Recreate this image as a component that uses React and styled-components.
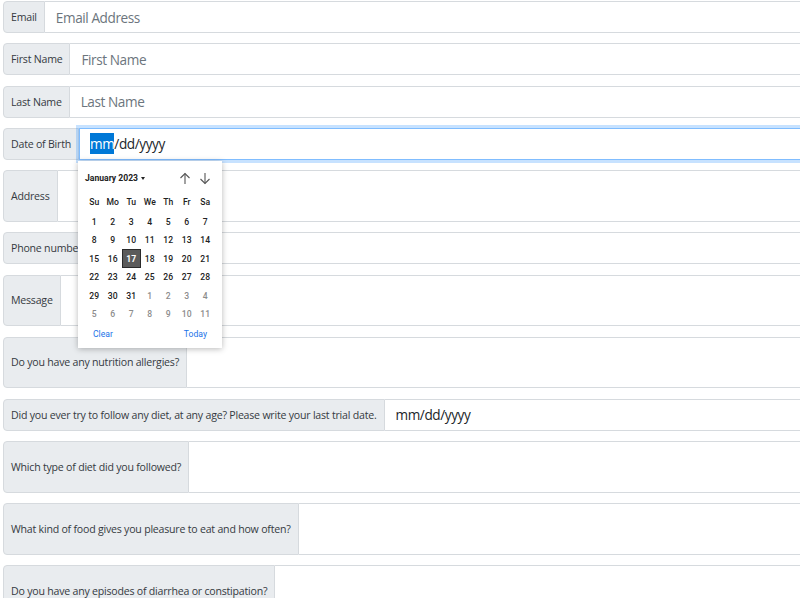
import React from "react";
import styled, { createGlobalStyle } from "styled-components";

const Global = createGlobalStyle`
  html, body { margin: 0; padding: 0; background: #fff; overflow: hidden; }
  body { font-family: "Open Sans", "Noto Sans", sans-serif; }
  * { box-sizing: border-box; }
`;

const Page = styled.div`
  width: 840px;
  padding: 1px 0 0 3px;
  display: flex;
  flex-direction: column;
  gap: 10.33px;
`;

const Row = styled.div`
  position: relative;
  display: flex;
  align-items: stretch;
  height: ${(p) => (p.$tall ? "51.67px" : "32px")};
`;

const Label = styled.div`
  display: flex;
  align-items: center;
  padding: 0 7px;
  background: #e9ecef;
  border: 1px solid #d6dade;
  border-radius: 4px 0 0 4px;
  font-size: 10.6px;
  letter-spacing: -0.22px;
  color: #353a3f;
  white-space: nowrap;
`;

const Field = styled.div`
  flex: 1;
  display: flex;
  align-items: center;
  padding: 0 11px;
  background: #fff;
  border: 1px solid #d6dade;
  border-left: none;
  font-size: 13.6px;
  letter-spacing: -0.42px;
  color: ${(p) => (p.$placeholder ? "#6c757d" : "#212529")};
  ${(p) =>
    p.$focus &&
    `
    border: 1px solid #80bdff;
    box-shadow: 0 0 0 3px rgba(0,123,255,.22);
    padding-left: 10px;
  `}
`;

const Sel = styled.span`
  background: #0078d7;
  color: #fff;
  padding: 1px 0;
`;

const Popup = styled.div`
  position: absolute;
  left: 75px;
  top: 33px;
  width: 144px;
  height: 187px;
  background: #fff;
  box-shadow: 0 1px 6px rgba(0, 0, 0, 0.28);
  font-family: Roboto, "Liberation Sans", sans-serif;
  font-size: 8.6px;
  letter-spacing: 0;
  color: #222;
  z-index: 5;
  display: flex;
  flex-direction: column;
  padding: 9px 7px 0 7px;
`;

const CalHead = styled.div`
  display: flex;
  align-items: center;
  height: 17px;
`;

const Month = styled.div`
  font-weight: 700;
  display: flex;
  align-items: center;
  gap: 3px;
  flex: 1;
`;

const Caret = styled.span`
  width: 0;
  height: 0;
  border-left: 2.5px solid transparent;
  border-right: 2.5px solid transparent;
  border-top: 3px solid #222;
`;

const ArrowBtn = styled.div`
  width: 20px;
  display: flex;
  justify-content: center;
  align-items: center;
`;

const Grid = styled.div`
  display: grid;
  grid-template-columns: repeat(7, 18.5px);
  grid-auto-rows: 18.5px;
  margin-top: 7px;
`;

const Cell = styled.div`
  display: flex;
  align-items: center;
  justify-content: center;
  font-weight: 500;
  color: ${(p) => (p.$muted ? "#8c8c8c" : "#222")};
  margin-bottom: ${(p) => (p.$head ? "1.5px" : "0")};
  ${(p) =>
    p.$sel &&
    `
    background: #5b5b5b;
    border: 1.5px solid #2a2a2a;
    color: #fff;
    font-weight: 700;
  `}
`;

const Foot = styled.div`
  display: flex;
  justify-content: space-between;
  padding: 0 8px 0 8px;
  margin-top: 6px;
  color: #1a73e8;
  font-size: 8.6px;
`;

const Arrow = ({ down }) => (
  <svg width="12" height="13" viewBox="0 0 12 13">
    <g
      fill="none"
      stroke="#555"
      strokeWidth="1.1"
      transform={down ? "rotate(180 6 6.5)" : undefined}
    >
      <path d="M6 1.5V12" />
      <path d="M1.5 6L6 1.5L10.5 6" />
    </g>
  </svg>
);

const heads = ["Su", "Mo", "Tu", "We", "Th", "Fr", "Sa"];
const days = [];
for (let d = 1; d <= 31; d++) days.push({ n: d });
for (let d = 1; d <= 11; d++) days.push({ n: d, muted: true });

const Calendar = () => (
  <Popup>
    <CalHead>
      <Month>
        January 2023 <Caret />
      </Month>
      <ArrowBtn>
        <Arrow />
      </ArrowBtn>
      <ArrowBtn>
        <Arrow down />
      </ArrowBtn>
    </CalHead>
    <Grid>
      {heads.map((h) => (
        <Cell key={h} $head>
          {h}
        </Cell>
      ))}
      {days.map((d, i) => (
        <Cell key={i} $muted={d.muted} $sel={!d.muted && d.n === 17}>
          {d.n}
        </Cell>
      ))}
    </Grid>
    <Foot>
      <span>Clear</span>
      <span>Today</span>
    </Foot>
  </Popup>
);

const rows = [
  { label: "Email", ph: "Email Address" },
  { label: "First Name", ph: "First Name" },
  { label: "Last Name", ph: "Last Name" },
  { label: "Date of Birth", dob: true },
  { label: "Address", tall: true },
  { label: "Phone number" },
  { label: "Message", tall: true },
  { label: "Do you have any nutrition allergies?", tall: true },
  {
    label:
      "Did you ever try to follow any diet, at any age? Please write your last trial date.",
    value: "mm/dd/yyyy",
  },
  { label: "Which type of diet did you followed?", tall: true },
  { label: "What kind of food gives you pleasure to eat and how often?", tall: true },
  { label: "Do you have any episodes of diarrhea or constipation?", tall: true },
];

export default function App() {
  return (
    <>
      <Global />
      <Page>
        {rows.map((r) => (
          <Row key={r.label} $tall={r.tall}>
            <Label>{r.label}</Label>
            {r.dob ? (
              <Field $focus>
                <Sel>mm</Sel>/dd/yyyy
              </Field>
            ) : (
              <Field $placeholder={!!r.ph}>{r.ph || r.value || ""}</Field>
            )}
            {r.dob && <Calendar />}
          </Row>
        ))}
      </Page>
    </>
  );
}
